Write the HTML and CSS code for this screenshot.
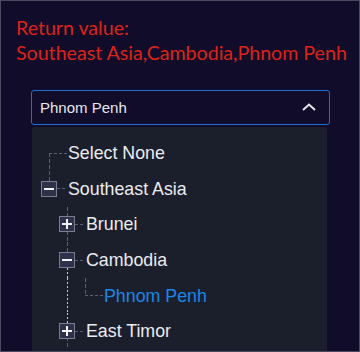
FILE: index.html
```html
<!DOCTYPE html>
<html>
<head>
<meta charset="utf-8">
<link rel="stylesheet" href="styles.css">
</head>
<body>
<div class="frame">
  <div class="result">
    <div>Return value:</div>
    <div>Southeast Asia,Cambodia,Phnom Penh</div>
  </div>
  <div class="select">
    <span class="select-value">Phnom Penh</span>
    <svg class="chevron" width="14" height="8" viewBox="0 0 14 8"><path d="M1 7 L7 1.5 L13 7" fill="none" stroke="#e6e6ea" stroke-width="2"/></svg>
  </div>
  <div class="dropdown">
    <div class="row lvl0">
      <span class="ln h" ></span>
      <span class="ln v-down0"></span>
      <span class="label">Select None</span>
    </div>
    <div class="row lvl0">
      <span class="ln h short"></span>
      <span class="box"><svg width="14" height="14" viewBox="0 0 14 14"><path d="M2 7 H12" stroke="#f2f2f4" stroke-width="2"/></svg></span>
      <span class="label">Southeast Asia</span>
    </div>
    <div class="row lvl1">
      <span class="ln v full"></span>
      <span class="ln h short"></span>
      <span class="box"><svg width="14" height="14" viewBox="0 0 14 14"><path d="M2 7 H12 M7 2 V12" stroke="#f2f2f4" stroke-width="2"/></svg></span>
      <span class="label">Brunei</span>
    </div>
    <div class="row lvl1">
      <span class="ln v top"></span>
      <span class="ln dot bottom"></span>
      <span class="ln h short"></span>
      <span class="box"><svg width="14" height="14" viewBox="0 0 14 14"><path d="M2 7 H12" stroke="#f2f2f4" stroke-width="2"/></svg></span>
      <span class="label">Cambodia</span>
    </div>
    <div class="row lvl2">
      <span class="ln dot full parent"></span>
      <span class="ln v top"></span>
      <span class="ln h"></span>
      <span class="label active">Phnom Penh</span>
    </div>
    <div class="row lvl1">
      <span class="ln dot top"></span>
      <span class="ln v bottom"></span>
      <span class="ln h short"></span>
      <span class="box"><svg width="14" height="14" viewBox="0 0 14 14"><path d="M2 7 H12 M7 2 V12" stroke="#f2f2f4" stroke-width="2"/></svg></span>
      <span class="label">East Timor</span>
    </div>
  </div>
</div>
</body>
</html>
```
FILE: styles.css
```css
html, body {
  margin: 0;
  padding: 0;
  background: #100c2a;
}
.frame {
  width: 360px;
  height: 352px;
  box-sizing: border-box;
  border: 1px solid #4b4a60;
  background: #100c2a;
  overflow: hidden;
  display: flex;
  flex-direction: column;
}
.result {
  color: #dd2219;
  font-family: Lato, "Open Sans", sans-serif;
  font-size: 19.6px;
  line-height: 25px;
  padding: 14px 0 0 15px;
  height: 75px;
  box-sizing: border-box;
}
.select {
  margin: 14px 0 0 30px;
  width: 299px;
  height: 35px;
  box-sizing: border-box;
  border: 1px solid #1f6fd1;
  border-radius: 3px;
  display: flex;
  align-items: center;
  justify-content: space-between;
  padding: 0 13px 0 8px;
  font-family: "Liberation Sans", Arial, sans-serif;
  font-size: 15px;
  color: #e8e8ec;
}
.chevron {
  display: block;
  margin-top: -1px;
}
.dropdown {
  margin: 2px 0 0 31px;
  width: 295px;
  flex: 1;
  background: #1b1f2c;
  border-radius: 3px 3px 0 0;
  padding-top: 8.5px;
  font-family: "Liberation Sans", Arial, sans-serif;
  font-size: 17.8px;
  color: #ececf0;
}
.row {
  position: relative;
  height: 35.6px;
  display: flex;
  align-items: center;
}
.lvl0 { --x: 17px; }
.lvl1 { --x: 35px; }
.lvl2 { --x: 53px; }
.label {
  position: absolute;
  left: calc(var(--x) + 19px);
  top: 50%;
  transform: translateY(-50%);
  white-space: nowrap;
  line-height: 20px;
}
.label.active { color: #1a87e6; }
.box {
  position: absolute;
  left: calc(var(--x) - 8px);
  top: calc(50% - 8px);
  width: 16px;
  height: 16px;
  box-sizing: border-box;
  border: 1px solid #7a7d90;
  background: #2e3149;
  display: flex;
  align-items: center;
  justify-content: center;
  z-index: 2;
}
.box svg { display: block; }
.ln { position: absolute; }
.ln.h {
  left: var(--x);
  width: 18px;
  top: calc(50% - 0.5px);
  height: 1px;
  background: repeating-linear-gradient(to right, #5d6072 0 3px, transparent 3px 5px);
}
.ln.h.short {
  left: calc(var(--x) + 8px);
  width: 10px;
}
.ln.v, .ln.v-down0, .ln.dot {
  left: var(--x);
  width: 1px;
}
.ln.v, .ln.v-down0 {
  background: repeating-linear-gradient(to bottom, #5d6072 0 4px, transparent 4px 6px);
}
.ln.dot {
  background: repeating-linear-gradient(to bottom, #c9cad2 0 2px, transparent 2px 4px);
}
.ln.v-down0 {
  top: 50%;
  height: 27.6px;
}
.ln.full { top: 0; bottom: 0; }
.ln.top { top: 0; height: 50%; }
.ln.bottom { top: 50%; bottom: 0; }
.ln.parent { left: calc(var(--x) - 18px); }
```
